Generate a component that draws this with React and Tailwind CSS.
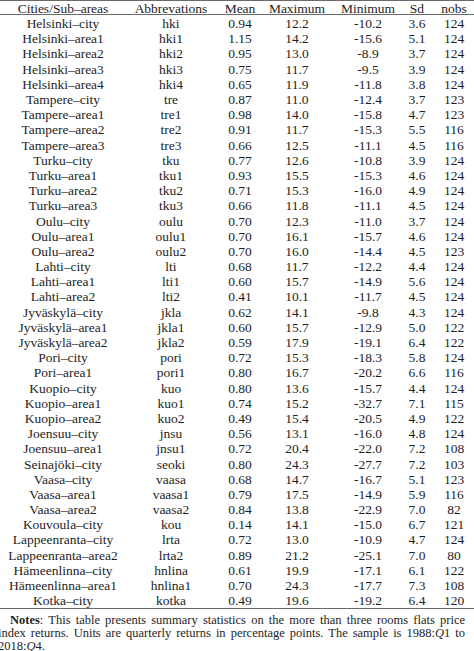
const rows = [
    ['Helsinki–city', 'hki', '0.94', '12.2', '-10.2', '3.6', '124'],
    ['Helsinki–area1', 'hki1', '1.15', '14.2', '-15.6', '5.1', '124'],
    ['Helsinki–area2', 'hki2', '0.95', '13.0', '-8.9', '3.7', '124'],
    ['Helsinki–area3', 'hki3', '0.75', '11.7', '-9.5', '3.9', '124'],
    ['Helsinki–area4', 'hki4', '0.65', '11.9', '-11.8', '3.8', '124'],
    ['Tampere–city', 'tre', '0.87', '11.0', '-12.4', '3.7', '123'],
    ['Tampere–area1', 'tre1', '0.98', '14.0', '-15.8', '4.7', '123'],
    ['Tampere–area2', 'tre2', '0.91', '11.7', '-15.3', '5.5', '116'],
    ['Tampere–area3', 'tre3', '0.66', '12.5', '-11.1', '4.5', '116'],
    ['Turku–city', 'tku', '0.77', '12.6', '-10.8', '3.9', '124'],
    ['Turku–area1', 'tku1', '0.93', '15.5', '-15.3', '4.6', '124'],
    ['Turku–area2', 'tku2', '0.71', '15.3', '-16.0', '4.9', '124'],
    ['Turku–area3', 'tku3', '0.66', '11.8', '-11.1', '4.5', '124'],
    ['Oulu–city', 'oulu', '0.70', '12.3', '-11.0', '3.7', '124'],
    ['Oulu–area1', 'oulu1', '0.70', '16.1', '-15.7', '4.6', '124'],
    ['Oulu–area2', 'oulu2', '0.70', '16.0', '-14.4', '4.5', '123'],
    ['Lahti–city', 'lti', '0.68', '11.7', '-12.2', '4.4', '124'],
    ['Lahti–area1', 'lti1', '0.60', '15.7', '-14.9', '5.6', '124'],
    ['Lahti–area2', 'lti2', '0.41', '10.1', '-11.7', '4.5', '124'],
    ['Jyväskylä–city', 'jkla', '0.62', '14.1', '-9.8', '4.3', '124'],
    ['Jyväskylä–area1', 'jkla1', '0.60', '15.7', '-12.9', '5.0', '122'],
    ['Jyväskylä–area2', 'jkla2', '0.59', '17.9', '-19.1', '6.4', '122'],
    ['Pori–city', 'pori', '0.72', '15.3', '-18.3', '5.8', '124'],
    ['Pori–area1', 'pori1', '0.80', '16.7', '-20.2', '6.6', '116'],
    ['Kuopio–city', 'kuo', '0.80', '13.6', '-15.7', '4.4', '124'],
    ['Kuopio–area1', 'kuo1', '0.74', '15.2', '-32.7', '7.1', '115'],
    ['Kuopio–area2', 'kuo2', '0.49', '15.4', '-20.5', '4.9', '122'],
    ['Joensuu–city', 'jnsu', '0.56', '13.1', '-16.0', '4.8', '124'],
    ['Joensuu–area1', 'jnsu1', '0.72', '20.4', '-22.0', '7.2', '108'],
    ['Seinajöki–city', 'seoki', '0.80', '24.3', '-27.7', '7.2', '103'],
    ['Vaasa–city', 'vaasa', '0.68', '14.7', '-16.7', '5.1', '123'],
    ['Vaasa–area1', 'vaasa1', '0.79', '17.5', '-14.9', '5.9', '116'],
    ['Vaasa–area2', 'vaasa2', '0.84', '13.8', '-22.9', '7.0', '82'],
    ['Kouvoula–city', 'kou', '0.14', '14.1', '-15.0', '6.7', '121'],
    ['Lappeenranta–city', 'lrta', '0.72', '13.0', '-10.9', '4.7', '124'],
    ['Lappeenranta–area2', 'lrta2', '0.89', '21.2', '-25.1', '7.0', '80'],
    ['Hämeenlinna–city', 'hnlina', '0.61', '19.9', '-17.1', '6.1', '122'],
    ['Hämeenlinna–area1', 'hnlina1', '0.70', '24.3', '-17.7', '7.3', '108'],
    ['Kotka–city', 'kotka', '0.49', '19.6', '-19.2', '6.4', '120'],
];

const headers = ['Cities/Sub–areas', 'Abbrevations', 'Mean', 'Maximum', 'Minimum', 'Sd', 'nobs'];

// column widths picked so each centre lands where the printed column sits
const cols = 'grid grid-cols-[126px_90px_48px_66px_76px_22px_52px]';

function Cell({ children }) {
    return <div className="flex justify-center whitespace-nowrap">{children}</div>;
}

export default function App() {
    return (
        <div className="w-[474px] h-[651px] overflow-hidden bg-white text-[#1e1e1e] font-serif">
            <div className="font-['Liberation_Serif'] text-[13.5px] leading-[15px]">
                {/* Header */}
                <div className={`${cols} items-center h-[15px] border-t border-b border-[#6a6a6a]`}>
                    {headers.map((h) => (
                        <Cell key={h}>{h}</Cell>
                    ))}
                </div>

                {/* Body */}
                <div className="pt-[1px] border-b border-[#6a6a6a]">
                    {rows.map((r) => (
                        <div key={r[0]} className={`${cols} items-center h-[15.2px]`}>
                            {r.map((v, i) => (
                                <Cell key={i}>{v}</Cell>
                            ))}
                        </div>
                    ))}
                </div>

                {/* Notes */}
                <div className="pt-[5px] -ml-[2px] mr-[9px] text-[12.5px] leading-[12.6px]">
                    <div className="text-justify [text-align-last:justify] pl-[12px]">
                        <b>Notes</b>: This table presents summary statistics on the more than three rooms flats price
                    </div>
                    <div className="text-justify [text-align-last:justify]">
                        index returns. Units are quarterly returns in percentage points. The sample is 1988:<i>Q</i>1 to
                    </div>
                    <div>
                        2018:<i>Q</i>4.
                    </div>
                </div>
            </div>
        </div>
    );
}
